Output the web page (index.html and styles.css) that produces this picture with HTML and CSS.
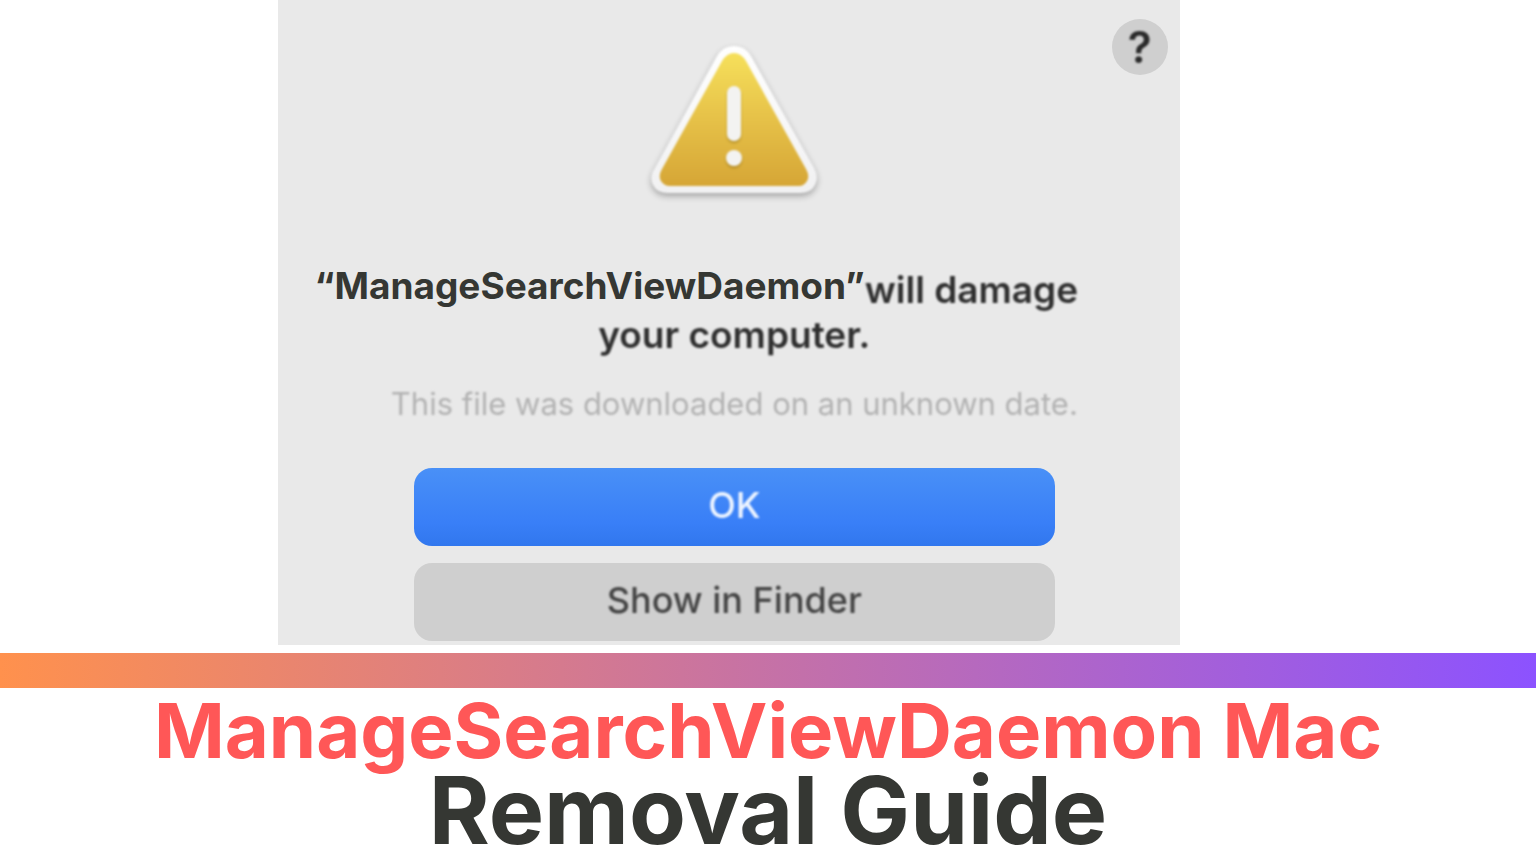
FILE: index.html
```html
<!DOCTYPE html>
<html lang="en">
<head>
<meta charset="utf-8">
<meta name="viewport" content="width=device-width, initial-scale=1">
<title>ManageSearchViewDaemon Mac Removal Guide</title>
<link rel="stylesheet" href="styles.css">
</head>
<body>
<main class="page">
  <section class="dialog" aria-labelledby="alert-title">
    <button class="help" type="button" aria-label="Help"><span class="soft">?</span></button>
    <svg class="warning" viewBox="0 0 180 164" aria-hidden="true">
      <defs>
        <linearGradient id="gold" x1="0" y1="0" x2="0" y2="1">
          <stop offset="0" stop-color="#f6e05b"/>
          <stop offset="0.5" stop-color="#e6c148"/>
          <stop offset="1" stop-color="#d6a636"/>
        </linearGradient>
        <linearGradient id="rim" x1="0" y1="0" x2="0" y2="1">
          <stop offset="0" stop-color="#ffffff"/>
          <stop offset="1" stop-color="#f1f1f2"/>
        </linearGradient>
      </defs>
      <path class="rim" fill="url(#rim)" d="M73 16Q79 6 90 6T107 16L170 128Q175 137 171 145T156 153H24Q13 153 9 145T11 128Z"/>
      <path fill="url(#gold)" d="M78 21Q83 13 90 13T102 21L162 129Q166 136 163 141T155 146H26Q20 146 17 141T18 129Z"/>
      <g class="mark">
        <rect x="83" y="46" width="14" height="55" rx="7"/>
        <circle cx="90" cy="118" r="8"/>
      </g>
    </svg>
    <h1 class="title" id="alert-title">
      <span class="title-row"><span class="name">“ManageSearchViewDaemon”</span><span class="soft">will damage</span></span>
      <span class="title-row soft">your computer.</span>
    </h1>
    <p class="note soft">This file was downloaded on an unknown date.</p>
    <div class="actions">
      <button class="action primary" type="button"><span class="soft">OK</span></button>
      <button class="action" type="button"><span class="soft">Show in Finder</span></button>
    </div>
  </section>
  <div class="band"></div>
  <h2 class="caption">
    <span class="threat">ManageSearchViewDaemon Mac</span>
    <span class="guide">Removal Guide</span>
  </h2>
</main>
</body>
</html>
```
FILE: styles.css
```css
* { box-sizing: border-box; }
body {
  margin: 0;
  background: #fff;
  color: #353733;
  font-family: Inter, "Liberation Sans", sans-serif;
}
.page { min-height: 100vh; }
.soft { filter: blur(1px); }
.dialog {
  position: relative;
  display: flex;
  flex-direction: column;
  align-items: center;
  width: 58.7%;
  margin-left: 18.1%;
  padding: 40px 125px 4px 136px;
  background: #e9e9e9;
}
.help {
  position: absolute;
  top: 19px;
  right: 12px;
  width: 56px;
  height: 56px;
  padding: 0;
  border: 0;
  border-radius: 50%;
  background: #cfcfcf;
  color: #2a2a2a;
  font: 600 44px/56px Inter, sans-serif;
}
.warning {
  width: 180px;
  height: 164px;
  filter: blur(1px);
}
.rim { filter: drop-shadow(0 3px 3px rgba(0, 0, 0, 0.3)); }
.mark {
  fill: #f3f3f1;
  filter: drop-shadow(0 2px 1px rgba(120, 90, 10, 0.4));
}
.title {
  display: flex;
  flex-direction: column;
  align-items: center;
  margin: 63px 0 0;
  color: #2f2f2f;
  font-size: 37px;
  font-weight: 600;
  line-height: 45px;
  white-space: nowrap;
}
.title-row {
  display: flex;
  align-items: flex-start;
}
.title-row:first-child { margin-right: 76px; }
.name {
  color: #353733;
  font-weight: 700;
  line-height: 38px;
}
.note {
  margin: 27px 0 0;
  color: #b2b2b2;
  font-size: 31px;
  line-height: 40px;
  white-space: nowrap;
}
.actions {
  display: flex;
  flex-direction: column;
  gap: 17px;
  width: 100%;
  margin-top: 44px;
}
.action {
  height: 78px;
  padding: 0 0 4px;
  border: 0;
  border-radius: 18px;
  background: #cfcfcf;
  color: #444;
  font: 500 36px/44px Inter, sans-serif;
}
.primary {
  background: linear-gradient(#4990f7, #397ff7 70%, #3177ee);
  color: #eef5ff;
}
.band {
  height: 35px;
  margin-top: 8px;
  background: linear-gradient(90deg, #ff914d, #8c52ff);
}
.caption {
  display: flex;
  flex-direction: column;
  align-items: center;
  margin: 0;
  font-weight: 700;
  white-space: nowrap;
}
.threat {
  color: #ff5757;
  font-size: 76px;
  line-height: 84px;
}
.guide {
  font-size: 93px;
  line-height: 76px;
}
```
